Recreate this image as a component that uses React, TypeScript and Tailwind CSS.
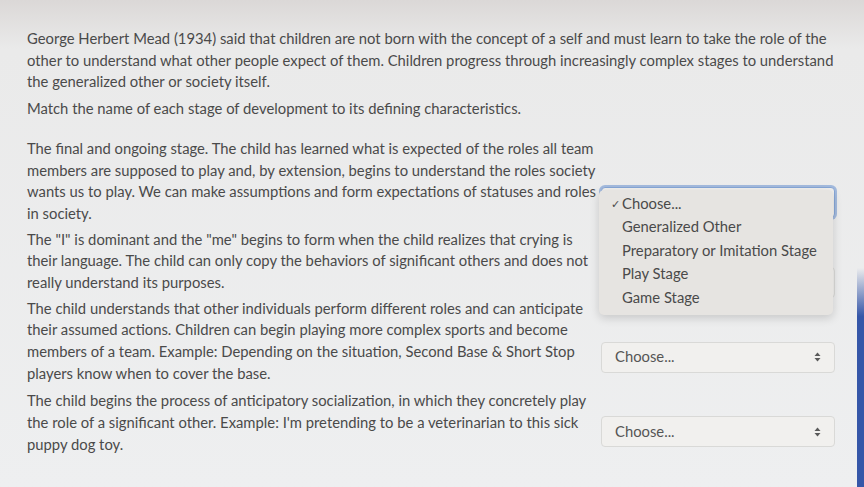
const intro = [
  'George Herbert Mead (1934) said that children are not born with the concept of a self and must learn to take the role of the',
  'other to understand what other people expect of them. Children progress through increasingly complex stages to understand',
  'the generalized other or society itself.',
];

const options = [
  'Choose...',
  'Generalized Other',
  'Preparatory or Imitation Stage',
  'Play Stage',
  'Game Stage',
];

const rows = [
  {
    pad: 'pt-[42px]',
    lines: [
      'The final and ongoing stage. The child has learned what is expected of the roles all team',
      'members are supposed to play and, by extension, begins to understand the roles society',
      'wants us to play. We can make assumptions and form expectations of statuses and roles',
      'in society.',
    ],
  },
  {
    pad: 'pt-[42px]',
    lines: [
      'The "I" is dominant and the "me" begins to form when the child realizes that crying is',
      'their language. The child can only copy the behaviors of significant others and does not',
      'really understand its purposes.',
    ],
  },
  {
    pad: 'pt-[32px]',
    lines: [
      'The child understands that other individuals perform different roles and can anticipate',
      'their assumed actions. Children can begin playing more complex sports and become',
      'members of a team. Example: Depending on the situation, Second Base & Short Stop',
      'players know when to cover the base.',
    ],
  },
  {
    pad: 'pt-[18px]',
    lines: [
      'The child begins the process of anticipatory socialization, in which they concretely play',
      'the role of a significant other. Example: I\'m pretending to be a veterinarian to this sick',
      'puppy dog toy.',
    ],
  },
];

function Arrows() {
  return (
    <svg width="7" height="10" viewBox="0 0 7 10" className="text-[#5a5a5a]">
      <polygon points="3.5,0.5 6.5,4 0.5,4" fill="currentColor" />
      <polygon points="0.5,6 6.5,6 3.5,9.5" fill="currentColor" />
    </svg>
  );
}

// covered: the select sits under the open list, so its label can't be seen
function SelectBox({ open, covered }: { open?: boolean; covered?: boolean }) {
  return (
    <div
      className={`relative flex h-[31px] w-[234px] items-center justify-between rounded-[4px] border bg-[#f1f0ee] pl-[13px] pr-[13px] ${
        open ? 'border-[#86a6d6] ring-2 ring-[#a3badd]' : 'border-[#d9d9d7]'
      }`}
    >
      <span className={open || covered ? 'invisible' : 'text-[#555]'}>Choose...</span>
      <Arrows />
      {open && (
        <div className="absolute left-[-3px] top-[2px] z-10 w-[234px] rounded-[5px] bg-[#e6e4e1] pb-[6px] pt-[2px] shadow-[0_3px_10px_rgba(0,0,0,0.16)]">
          {options.map((o, i) => (
            <div key={o} className="flex h-[23.5px] items-center pl-[12px] text-[#4a4a4a]">
              <span className="w-[11px] text-[11px]">{i === 0 ? '✓' : ''}</span>
              {o}
            </div>
          ))}
        </div>
      )}
    </div>
  );
}

export default function App() {
  return (
    <div className="flex h-[487px] w-[864px] overflow-hidden bg-gradient-to-b from-[#dbd8d7] via-[#eaeaea] via-10% to-[#eeeff0] font-['Lato','Noto_Sans',sans-serif] text-[14.8px] text-[#4a4a4a]">
      <div className="flex-1 pl-[27px] pt-[28px] leading-[21.7px]">
        {intro.map((l) => (
          <div key={l} className="whitespace-nowrap">{l}</div>
        ))}
        <div className="mt-[5px] whitespace-nowrap">
          Match the name of each stage of development to its defining characteristics.
        </div>

        <div className="mt-[18px] flex flex-col">
          {rows.map((row, i) => (
            <div key={i} className={`flex items-center gap-[3px] ${i === 3 ? 'mt-[6px]' : ''}`}>
              <div className="w-[571px]">
                {row.lines.map((l) => (
                  <div key={l} className="whitespace-nowrap">{l}</div>
                ))}
              </div>
              <div className={row.pad}>
                <SelectBox open={i === 0} covered={i === 1} />
              </div>
            </div>
          ))}
        </div>
      </div>
      <div className="w-[7px] bg-gradient-to-b from-transparent via-transparent via-55% to-[#3556a8] to-65%" />
    </div>
  );
}
